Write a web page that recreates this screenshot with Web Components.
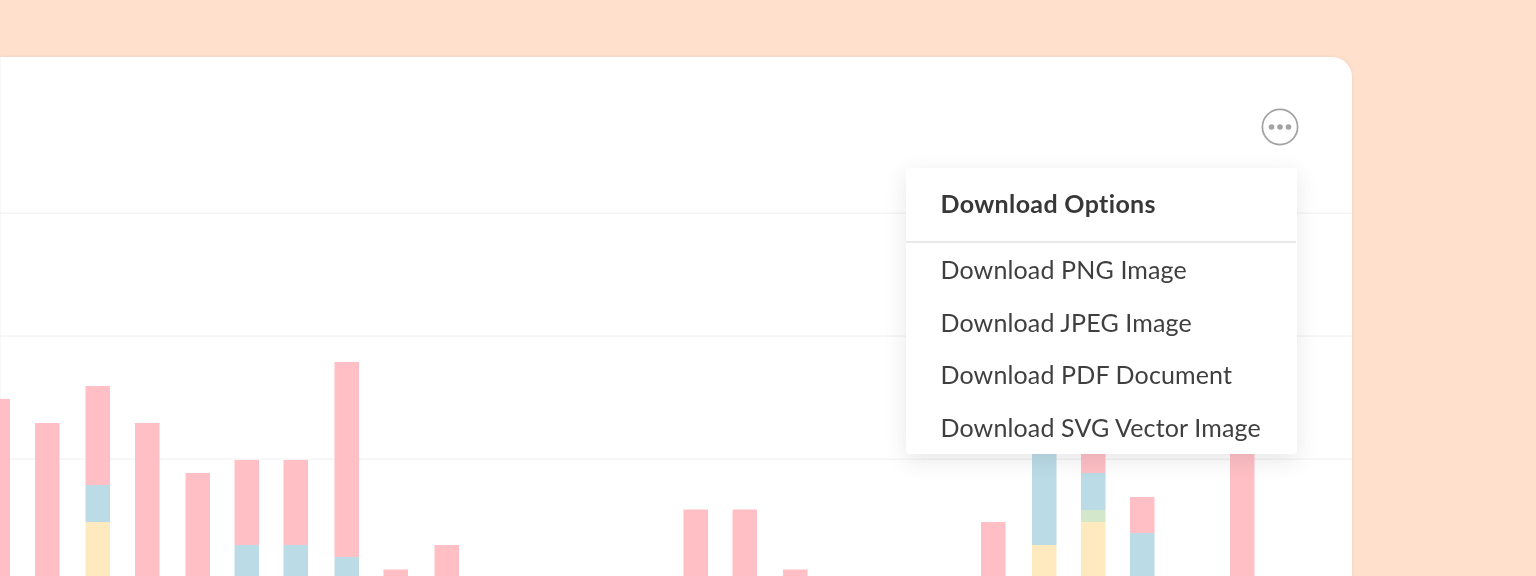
<!DOCTYPE html>
<html lang="en">
<head>
<meta charset="utf-8">
<title>Download options</title>
<style>
  html, body { margin: 0; height: 100%; overflow: hidden; background: #fee0cc; }
  body { font-family: "Lato", "Noto Sans", sans-serif; color: #3f3f3f; }
</style>
</head>
<body>
<chart-card>
  <more-button slot="action"></more-button>
  <bar-chart slot="chart"></bar-chart>
  <download-menu slot="menu" heading="Download Options">
    <menu-item>Download PNG Image</menu-item>
    <menu-item>Download JPEG Image</menu-item>
    <menu-item>Download PDF Document</menu-item>
    <menu-item>Download SVG Vector Image</menu-item>
  </download-menu>
</chart-card>

<script>
const cardTemplate = document.createElement('template');
cardTemplate.innerHTML = `
  <style>
  :host {
    display: block;
    position: relative;
    box-sizing: border-box;
    height: 519px;
    margin: 57px 184px 0 0;
    background: #fff;
    border-radius: 0 20px 0 0;
    box-shadow: 0 0 3px rgba(120, 90, 70, 0.14), inset 1px 0 0 #f7f7f7;
    filter: blur(0.4px);
  }
  header {
    display: flex;
    justify-content: flex-end;
    padding: 50.5px 53px 0 0;
  }
  </style>
  <header><slot name="action"></slot></header>
  <slot name="chart"></slot>
  <slot name="menu"></slot>
`;

class ChartCard extends HTMLElement {
  constructor () {
    super();
    this.attachShadow({mode: 'open'}).appendChild(cardTemplate.content.cloneNode(true));
  }
}
customElements.define('chart-card', ChartCard);

const buttonTemplate = document.createElement('template');
buttonTemplate.innerHTML = `
  <style>
  :host { display: block; width: 38px; height: 38px; }
  svg { display: block; }
  </style>
  <svg width="38" height="38" viewBox="0 0 38 38" aria-label="More">
    <circle cx="19" cy="19" r="17.6" fill="none" stroke="#a3a3a3" stroke-width="1.7"/>
    <circle cx="10.5" cy="19" r="2.8" fill="#a3a3a3"/>
    <circle cx="19" cy="19" r="2.8" fill="#a3a3a3"/>
    <circle cx="27.5" cy="19" r="2.8" fill="#a3a3a3"/>
  </svg>
`;

class MoreButton extends HTMLElement {
  constructor () {
    super();
    this.attachShadow({mode: 'open'}).appendChild(buttonTemplate.content.cloneNode(true));
  }
}
customElements.define('more-button', MoreButton);

// colours of the stacks
const COLORS = {p: '#ffbfc4', b: '#bbdce6', y: '#ffe9be', g: '#d3e8ca'};

// x, width, then [colour, top] from the top of the stack down
const BARS = [
  [-15, 25, [['p', 399]]],
  [35, 24.5, [['p', 423]]],
  [85.5, 24.5, [['p', 386], ['b', 485], ['y', 522]]],
  [135, 24.5, [['p', 423]]],
  [185.5, 24.5, [['p', 473]]],
  [234.5, 24.5, [['p', 460], ['b', 545]]],
  [283.5, 24.5, [['p', 460], ['b', 545]]],
  [334.5, 24.5, [['p', 362], ['b', 557]]],
  [383.5, 24.5, [['p', 569.5]]],
  [434.5, 24.5, [['p', 545]]],
  [683.5, 24.5, [['p', 509.5]]],
  [732.5, 24.5, [['p', 509.5]]],
  [783, 24.5, [['p', 569.5]]],
  [981, 24.5, [['p', 522]]],
  [1032, 24.5, [['b', 440], ['y', 545]]],
  [1081, 24.5, [['p', 440], ['b', 473], ['g', 510], ['y', 522]]],
  [1130, 24.5, [['p', 497], ['b', 533]]],
  [1230, 24.5, [['p', 440]]]
];

class BarChart extends HTMLElement {
  constructor () {
    super();
    this.attachShadow({mode: 'open'});
  }
  connectedCallback () {
    const top = 200; // svg starts here on the page, y values are page values
    const floor = 576;
    let marks = '';
    [213, 336, 459].forEach((y) => {
      marks += `<rect x="0" y="${y - 0.5}" width="1352" height="1.2" fill="#f1f1f3"/>`;
    });
    BARS.forEach(([x, w, parts]) => {
      parts.forEach(([c, y], i) => {
        const end = i + 1 < parts.length ? parts[i + 1][1] : floor;
        marks += `<rect x="${x}" y="${y}" width="${w}" height="${end - y}" fill="${COLORS[c]}"/>`;
      });
    });
    this.shadowRoot.innerHTML = `
      <style>
      :host { display: block; margin-top: 54.5px; }
      svg { display: block; width: 1352px; height: ${floor - top}px; }
      </style>
      <svg viewBox="0 ${top} 1352 ${floor - top}">${marks}</svg>
    `;
  }
}
customElements.define('bar-chart', BarChart);

const menuTemplate = document.createElement('template');
menuTemplate.innerHTML = `
  <style>
  :host {
    display: block;
    position: absolute;
    top: 111px;
    left: 906px;
    width: 391px;
    background: #fff;
    border-radius: 4px;
    box-shadow: 0 6px 22px rgba(60, 60, 70, 0.12);
  }
  h2 {
    margin: 0 1px 0 0;
    padding: 18px 35px 20px 34.5px;
    font-size: 25px;
    line-height: 35px;
    font-weight: 700;
    letter-spacing: 0.35px;
    color: #383838;
    border-bottom: 2px solid #e9e9e9;
  }
  div { padding: 0 0 1px; }
  </style>
  <h2></h2>
  <div><slot></slot></div>
`;

class DownloadMenu extends HTMLElement {
  constructor () {
    super();
    this.attachShadow({mode: 'open'}).appendChild(menuTemplate.content.cloneNode(true));
    this.$heading = this.shadowRoot.querySelector('h2');
  }
  static get observedAttributes () {
    return ['heading'];
  }
  attributeChangedCallback (name, oldValue, newValue) {
    if (oldValue === newValue) return;
    this.$heading.textContent = newValue;
  }
}
customElements.define('download-menu', DownloadMenu);

const itemTemplate = document.createElement('template');
itemTemplate.innerHTML = `
  <style>
  :host {
    display: block;
    padding: 0 34.5px;
    font-size: 25px;
    line-height: 52.5px;
    letter-spacing: 0.14px;
    color: #3f3f3f;
    white-space: nowrap;
  }
  </style>
  <slot></slot>
`;

class MenuItem extends HTMLElement {
  constructor () {
    super();
    this.attachShadow({mode: 'open'}).appendChild(itemTemplate.content.cloneNode(true));
  }
}
customElements.define('menu-item', MenuItem);
</script>
</body>
</html>
